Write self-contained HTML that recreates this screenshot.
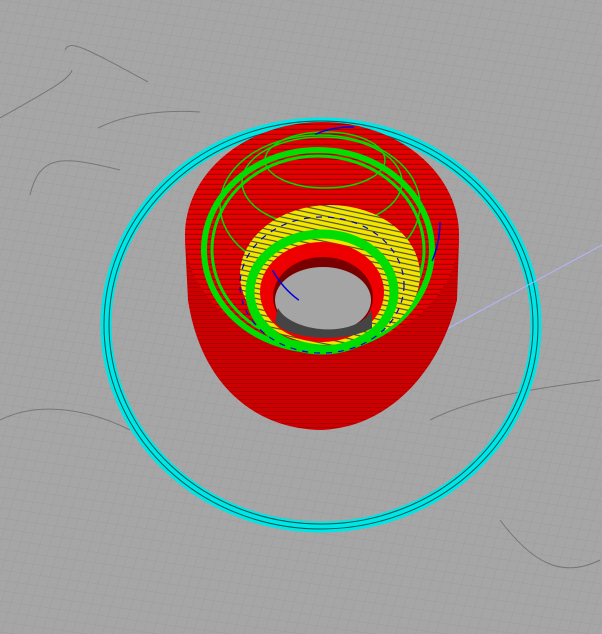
<!DOCTYPE html><html><head><style>html,body{margin:0;padding:0;width:602px;height:634px;overflow:hidden;background:#a5a5a5}</style></head><body>
<svg width="602" height="634" viewBox="0 0 602 634" xmlns="http://www.w3.org/2000/svg">
<defs>
<pattern id="g" width="10" height="10" patternUnits="userSpaceOnUse" patternTransform="skewX(-10) rotate(8)">
<rect width="10" height="10" fill="#a6a6a6"/><path d="M0 0H10M0 0V10" stroke="#9c9c9c" stroke-width="1"/></pattern>
<pattern id="rs" width="5" height="5" patternUnits="userSpaceOnUse"><rect width="5" height="5" fill="#e60000"/><rect y="3.8" width="5" height="1.2" fill="#900"/></pattern>
<pattern id="bs" width="4" height="4" patternUnits="userSpaceOnUse"><rect width="4" height="4" fill="#cc0000"/><rect y="3" width="4" height="1" fill="#a00"/></pattern>
<pattern id="ys" width="6" height="5" patternUnits="userSpaceOnUse" patternTransform="rotate(12)"><rect width="6" height="5" fill="#f2e600"/><rect y="3.2" width="6" height="1" fill="#333"/></pattern>
</defs>
<rect width="602" height="634" fill="url(#g)"/>
<g fill="none" stroke="#777" stroke-width="1">
<path d="M65 50 C70 40 80 45 148 82"/><path d="M0 118 C40 95 70 80 72 70"/><path d="M98 128 C130 112 170 110 200 112"/>
<path d="M30 195 C40 155 60 155 120 170"/><path d="M0 420 C40 400 90 410 130 430"/><path d="M430 420 C470 400 520 390 600 380"/>
<path d="M500 520 C530 560 560 580 600 560"/>
</g>
<ellipse cx="321" cy="325" rx="215" ry="202" fill="none" stroke="#00e5e5" stroke-width="11"/>
<ellipse cx="321" cy="325" rx="212" ry="199" fill="none" stroke="#005555" stroke-width="1"/>
<ellipse cx="321" cy="325" rx="217" ry="204" fill="none" stroke="#005555" stroke-width="1"/>
<line x1="445" y1="330" x2="602" y2="245" stroke="#b4b4ff" stroke-width="1"/>
<path d="M185 240 L188 300 C200 380 250 428 320 430 C390 428 440 370 457 300 L459 240 Z" fill="url(#bs)"/>
<ellipse cx="322" cy="235" rx="137" ry="113" fill="url(#rs)"/>
<ellipse cx="318" cy="250" rx="114" ry="100" fill="none" stroke="#0d0" stroke-width="6"/>
<ellipse cx="318" cy="250" rx="106" ry="94" fill="none" stroke="#0d0" stroke-width="3"/>
<ellipse cx="320" cy="205" rx="100" ry="70" fill="none" stroke="#0d0" stroke-width="1.5"/>
<ellipse cx="322" cy="182" rx="80" ry="45" fill="none" stroke="#0d0" stroke-width="1.5"/>
<ellipse cx="325" cy="160" rx="60" ry="28" fill="none" stroke="#0d0" stroke-width="1.5"/>
<ellipse cx="330" cy="275" rx="90" ry="70" fill="url(#ys)"/>
<ellipse cx="322" cy="292" rx="72" ry="58" fill="none" stroke="#0d0" stroke-width="9"/>
<ellipse cx="322" cy="292" rx="62" ry="50" fill="#e00"/>
<ellipse cx="323" cy="297" rx="50" ry="40" fill="#7a0000"/>
<ellipse cx="323" cy="300" rx="48" ry="33" fill="#a5a5a5"/>
<path d="M278 308 C290 332 355 340 372 310 L372 328 C350 342 290 342 275 322Z" fill="#444"/>
<ellipse cx="350" cy="222" rx="90" ry="95" fill="none" stroke="#0000e0" stroke-width="1.5" stroke-dasharray="40 160"/>
<ellipse cx="322" cy="285" rx="82" ry="68" fill="none" stroke="#0000e0" stroke-width="1.2" stroke-dasharray="6 6"/>
</svg>
</body></html>
